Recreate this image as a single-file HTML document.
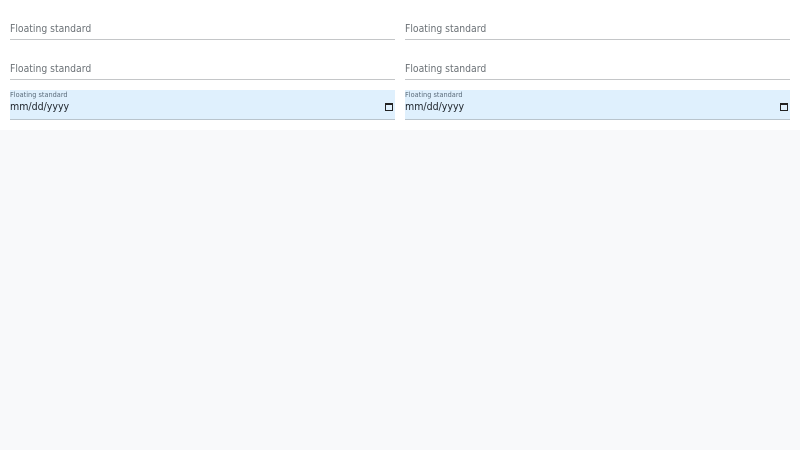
<!DOCTYPE html>
<html><head><style>
body{margin:0;width:800px;height:450px;background:#f8f9fa;font-family:"DejaVu Sans Condensed","DejaVu Sans",sans-serif;}
.top{background:#fff;height:130px;position:relative;}
.f{position:absolute;width:385px;border-bottom:1px solid #c4c6c8;}
.t{height:39px;}
.t span{position:absolute;left:0;top:23px;font-size:10.3px;color:#6b7176;}
.d{height:29px;background:#dff0fd;top:90px;border-bottom-color:#b9c4cc;}
.d .l{position:absolute;left:0;top:0px;font-size:7.3px;color:#5a6b7a;}
.d .v{position:absolute;left:0;top:11px;font-size:10.5px;color:#1d232a;}
.cal{position:absolute;right:2px;top:13px;width:6px;height:5px;border:1px solid #222;border-top-width:2px;}
</style></head><body><div class="top">
<div class="f t" style="left:10px;top:0"><span>Floating standard</span></div>
<div class="f t" style="left:405px;top:0"><span>Floating standard</span></div>
<div class="f t" style="left:10px;top:40px"><span>Floating standard</span></div>
<div class="f t" style="left:405px;top:40px"><span>Floating standard</span></div>
<div class="f d" style="left:10px"><div class="l">Floating standard</div><div class="v">mm/dd/yyyy</div><div class="cal"></div></div>
<div class="f d" style="left:405px"><div class="l">Floating standard</div><div class="v">mm/dd/yyyy</div><div class="cal"></div></div>
</div></body></html>
